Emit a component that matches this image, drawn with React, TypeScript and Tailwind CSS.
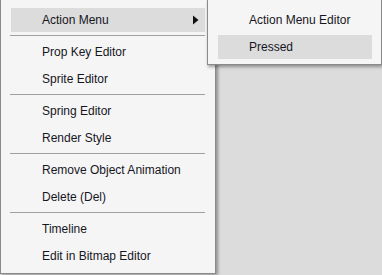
import React from "react";

type Entry = { label: string; arrow?: boolean; active?: boolean } | "sep";

const mainItems: Entry[] = [
  { label: "Action Menu", arrow: true, active: true },
  "sep",
  { label: "Prop Key Editor" },
  { label: "Sprite Editor" },
  "sep",
  { label: "Spring Editor" },
  { label: "Render Style" },
  "sep",
  { label: "Remove Object Animation" },
  { label: "Delete (Del)" },
  "sep",
  { label: "Timeline" },
  { label: "Edit in Bitmap Editor" },
];

function Item({ label, arrow, active }: { label: string; arrow?: boolean; active?: boolean }) {
  return (
    <div
      className={`relative flex h-[24px] shrink-0 items-center pl-[31px] text-[12px] leading-none text-[#16161e] ${
        active ? "bg-[#dcdcdc]" : ""
      }`}
    >
      <span className="whitespace-nowrap">{label}</span>
      {arrow && (
        <svg className="absolute left-[182px] top-[7px]" width="6" height="10" viewBox="0 0 6 10">
          <path d="M0 0.5 L5.5 5 L0 9.5 Z" fill="#111" />
        </svg>
      )}
    </div>
  );
}

export default function App() {
  return (
    <div
      className="relative h-[275px] w-[382px] overflow-hidden bg-[#dcdcdc]"
      style={{ fontFamily: '"Liberation Sans", Arial, sans-serif' }}
    >
      <div className="flex h-[274px] w-[216px] flex-col gap-[3px] border-b border-l border-r border-[#8a8a8a] bg-[#f5f5f5] px-[10px] pt-[8px] shadow-[2px_1px_3px_rgba(0,0,0,0.35)]">
        {mainItems.map((e, i) =>
          e === "sep" ? (
            <div key={i} className="h-[2px] shrink-0">
              <div className="-ml-px h-px bg-[#a0a0a0]" />
            </div>
          ) : (
            <Item key={i} label={e.label} arrow={e.arrow} active={e.active} />
          )
        )}
      </div>
      <div className="absolute left-[207px] top-0 flex h-[65px] w-[175px] flex-col gap-[3px] border-b border-l border-r border-[#8a8a8a] bg-[#f5f5f5] pl-[10px] pr-[9px] pt-[8px] shadow-[1px_2px_3px_rgba(0,0,0,0.35)]">
        <Item label="Action Menu Editor" />
        <Item label="Pressed" active />
      </div>
    </div>
  );
}
